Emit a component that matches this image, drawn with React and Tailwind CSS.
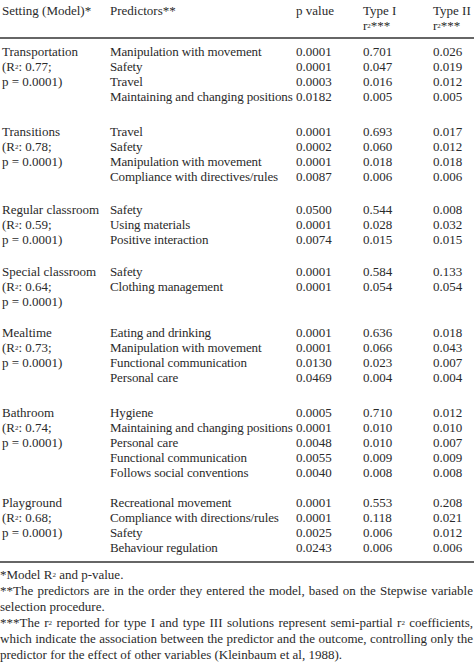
import React from "react";

const groups = [
  {
    gap: "mt-[5px]",
    setting: ["Transportation", "(R²: 0.77;", "p = 0.0001)"],
    rows: [
      ["Manipulation with movement", "0.0001", "0.701", "0.026"],
      ["Safety", "0.0001", "0.047", "0.019"],
      ["Travel", "0.0003", "0.016", "0.012"],
      ["Maintaining and changing positions", "0.0182", "0.005", "0.005"],
    ],
  },
  {
    gap: "mt-[20px]",
    setting: ["Transitions", "(R²: 0.78;", "p = 0.0001)"],
    rows: [
      ["Travel", "0.0001", "0.693", "0.017"],
      ["Safety", "0.0002", "0.060", "0.012"],
      ["Manipulation with movement", "0.0001", "0.018", "0.018"],
      ["Compliance with directives/rules", "0.0087", "0.006", "0.006"],
    ],
  },
  {
    gap: "mt-[18px]",
    setting: ["Regular classroom", "(R²: 0.59;", "p = 0.0001)"],
    rows: [
      ["Safety", "0.0500", "0.544", "0.008"],
      ["Using materials", "0.0001", "0.028", "0.032"],
      ["Positive interaction", "0.0074", "0.015", "0.015"],
    ],
  },
  {
    gap: "mt-[17px]",
    setting: ["Special classroom", "(R²: 0.64;", "p = 0.0001)"],
    rows: [
      ["Safety", "0.0001", "0.584", "0.133"],
      ["Clothing management", "0.0001", "0.054", "0.054"],
    ],
  },
  {
    gap: "mt-[16px]",
    setting: ["Mealtime", "(R²: 0.73;", "p = 0.0001)"],
    rows: [
      ["Eating and drinking", "0.0001", "0.636", "0.018"],
      ["Manipulation with movement", "0.0001", "0.066", "0.043"],
      ["Functional communication", "0.0130", "0.023", "0.007"],
      ["Personal care", "0.0469", "0.004", "0.004"],
    ],
  },
  {
    gap: "mt-[20px]",
    setting: ["Bathroom", "(R²: 0.74;", "p = 0.0001)"],
    rows: [
      ["Hygiene", "0.0005", "0.710", "0.012"],
      ["Maintaining and changing positions", "0.0001", "0.010", "0.010"],
      ["Personal care", "0.0048", "0.010", "0.007"],
      ["Functional communication", "0.0055", "0.009", "0.009"],
      ["Follows social conventions", "0.0040", "0.008", "0.008"],
    ],
  },
  {
    gap: "mt-[15px]",
    setting: ["Playground", "(R²: 0.68;", "p = 0.0001)"],
    rows: [
      ["Recreational movement", "0.0001", "0.553", "0.208"],
      ["Compliance with directions/rules", "0.0001", "0.118", "0.021"],
      ["Safety", "0.0025", "0.006", "0.012"],
      ["Behaviour regulation", "0.0243", "0.006", "0.006"],
    ],
  },
];

const Sup = ({ children }) => (
  <sup className="text-[7px] leading-none relative -top-[2px] align-baseline">{children}</sup>
);

const SettingLine = ({ text }) => {
  if (text.includes("²")) {
    const [a, b] = text.split("²");
    return (
      <div>
        {a}
        <Sup>2</Sup>
        {b}
      </div>
    );
  }
  return <div>{text}</div>;
};

const Group = ({ group }) => {
  const n = Math.max(group.setting.length, group.rows.length);
  return (
    <div className={`flex ${group.gap}`}>
      <div className="w-[110px] shrink-0 pl-[2px]">
        {group.setting.map((s, i) => (
          <SettingLine key={i} text={s} />
        ))}
      </div>
      <div className="flex-1">
        {Array.from({ length: n }).map((_, i) => {
          const r = group.rows[i];
          return (
            <div key={i} className="flex h-[15px]">
              <div className="w-[186px] whitespace-nowrap tracking-[-0.12px]">{r ? r[0] : ""}</div>
              <div className="w-[67px]">{r ? r[1] : ""}</div>
              <div className="w-[70px]">{r ? r[2] : ""}</div>
              <div>{r ? r[3] : ""}</div>
            </div>
          );
        })}
      </div>
    </div>
  );
};

export default function App() {
  return (
    <div
      className="w-[474px] h-[667px] overflow-hidden bg-white text-[#2a2a2a] text-[13px] leading-[15px]"
      style={{ fontFamily: '"Liberation Serif", serif' }}
    >
      {/* header */}
      <div className="flex pt-[3px] pb-[4px] border-b-2 border-[#666]">
        <div className="w-[110px] pl-[2px]">Setting (Model)*</div>
        <div className="w-[186px]">Predictors**</div>
        <div className="w-[67px]">p value</div>
        <div className="w-[70px]">
          <div>Type I</div>
          <div>
            r<Sup>2</Sup>***
          </div>
        </div>
        <div>
          <div>Type II</div>
          <div>
            r<Sup>2</Sup>***
          </div>
        </div>
      </div>

      {/* body */}
      <div className="pb-[6px] border-b-2 border-[#666]">
        {groups.map((g, i) => (
          <Group key={i} group={g} />
        ))}
      </div>

      {/* notes */}
      <div className="pt-[4px] pr-[1px] leading-[16px]">
        <div className="whitespace-nowrap">
          *Model R<Sup>2</Sup> and p-value.
        </div>
        <div className="text-justify [text-align-last:justify]">
          **The predictors are in the order they entered the model, based on the Stepwise variable
        </div>
        <div className="whitespace-nowrap">selection procedure.</div>
        <div className="text-justify [text-align-last:justify]">
          ***The r<Sup>2</Sup> reported for type I and type III solutions represent semi-partial r<Sup>2</Sup> coefficients,
        </div>
        <div className="text-justify [text-align-last:justify]">
          which indicate the association between the predictor and the outcome, controlling only the
        </div>
        <div className="whitespace-nowrap">predictor for the effect of other variables (Kleinbaum et al, 1988).</div>
      </div>
    </div>
  );
}
